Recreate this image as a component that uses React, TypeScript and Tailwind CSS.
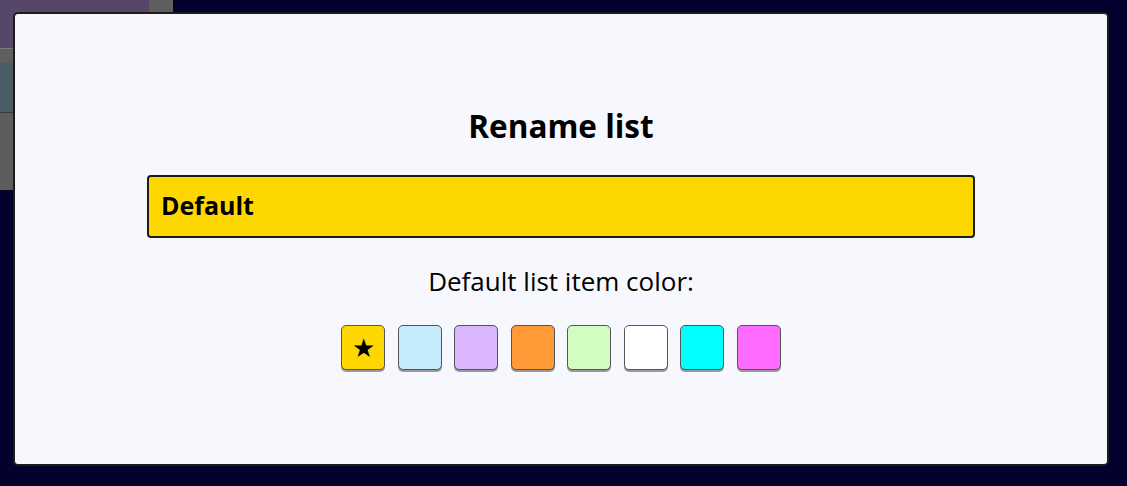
import {useState} from 'react'

const swatches = [
  {color: 'bg-[#ffd700]', selected: true},
  {color: 'bg-[#c5ecfd]'},
  {color: 'bg-[#dab6ff]'},
  {color: 'bg-[#ff9a36]'},
  {color: 'bg-[#d3fdc0]'},
  {color: 'bg-white'},
  {color: 'bg-[#00ffff]'},
  {color: 'bg-[#ff6aff]'},
]

export default function App() {
  const [name, setName] = useState('Default')

  return (
    <div className="relative w-[1127px] h-[486px] overflow-hidden bg-[#05012e] font-['Open_Sans',sans-serif]">
      {/* Page behind the dialog */}
      <div className="flex w-[173px]">
        <div className="flex flex-col w-[149px]">
          <div className="h-[48px] bg-[#56476a]" />
          <div className="h-[15px] bg-[#5f5f5f] border-t border-[#7a7a7a]" />
          <div className="h-[50px] bg-[#4a5d66] border-b border-[#3a3a3a]" />
          <div className="h-[77px] bg-[#5d5d5d]" />
        </div>
        <div className="w-[24px] h-[190px] bg-[#5f5f5f]" />
      </div>

      {/* Dialog */}
      <div className="absolute left-[13px] top-[12px] w-[1096px] h-[454px] rounded-[5px] border-2 border-[#1c1c1c] bg-[#f7f8fd] flex flex-col items-center justify-center">
        <h2 className="text-[31.5px] font-bold text-black leading-none mt-[6px]">Rename list</h2>
        <input
          value={name}
          onChange={e => setName(e.target.value)}
          className="mt-[33px] w-[828px] h-[63px] rounded-[4px] border-2 border-[#1c1c1c] bg-[#ffd700] px-[12px] pb-[2px] text-[25px] font-bold text-black outline-none"
        />
        <p className="mt-[27px] text-[26px] text-black leading-[32px]">Default list item color:</p>
        <div className="mt-[28px] mb-[4px] flex gap-[12.5px]">
          {swatches.map((s, i) => (
            <button
              key={i}
              className={`${s.color} w-[44px] h-[45px] rounded-[5px] border border-[#555] shadow-[0_2px_0_#9a9a9a] flex items-center justify-center text-[26px] leading-none text-black`}
            >
              {s.selected ? '★' : ''}
            </button>
          ))}
        </div>
      </div>
    </div>
  )
}
